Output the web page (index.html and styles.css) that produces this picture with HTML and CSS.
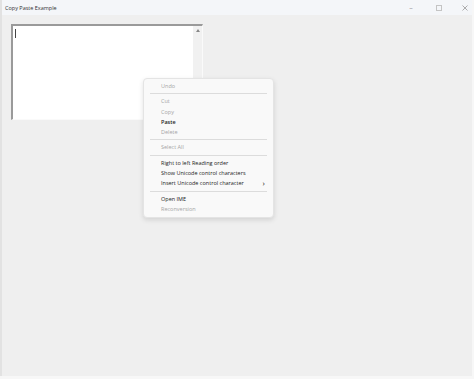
FILE: index.html
```html
<!DOCTYPE html>
<html lang="en">
  <head>
    <meta charset="UTF-8" />
    <title>Copy Paste Example</title>
    <link rel="stylesheet" href="styles.css">
  </head>
  <body>
    <main class="window">
      <header class="titlebar">
        <span class="title">Copy Paste Example</span>
        <div class="controls">
          <span class="ctl">&#x2013;</span>
          <span class="ctl max"></span>
          <svg class="close" width="6" height="6" viewBox="0 0 6 6">
            <path d="M0.5 0.5 L5.5 5.5 M5.5 0.5 L0.5 5.5" stroke="#999" stroke-width="0.8" fill="none" />
          </svg>
        </div>
      </header>
      <section class="client">
        <div class="textbox">
          <div class="edit"><span class="caret"></span></div>
          <div class="scroll"><span class="arrow"></span></div>
        </div>

        <div class="menu">
          <div class="item off">Undo</div>
          <div class="sep"></div>
          <div class="item off">Cut</div>
          <div class="item off">Copy</div>
          <div class="item bold">Paste</div>
          <div class="item off">Delete</div>
          <div class="sep"></div>
          <div class="item off">Select All</div>
          <div class="sep"></div>
          <div class="item">Right to left Reading order</div>
          <div class="item">Show Unicode control characters</div>
          <div class="item sub">Insert Unicode control character <span class="chev">&#x203A;</span></div>
          <div class="sep"></div>
          <div class="item">Open IME</div>
          <div class="item off">Reconversion</div>
        </div>
      </section>
    </main>
  </body>
</html>
```

FILE: styles.css
```css
body {
  margin: 0;
  width: 474px;
  height: 379px;
  background-color: #f7f7f7;
  font-family: "Open Sans", "Noto Sans", sans-serif;
  overflow: hidden;
}
.window {
  width: 472px;
  height: 376px;
  display: flex;
  flex-direction: column;
  background-color: #efefef;
  border-left: 2px solid #e2e2e2;
  box-sizing: border-box;
  position: relative;
}
.titlebar {
  height: 15px;
  background-color: #f4f6f9;
  display: flex;
  align-items: center;
  justify-content: space-between;
  padding-left: 3px;
}
.title {
  font-size: 5.5px;
  color: #333;
}
.controls {
  display: flex;
  align-items: center;
  gap: 17px;
  padding-right: 4px;
}
.ctl {
  width: 10px;
  font-size: 7px;
  color: #999;
  text-align: center;
}
.ctl.max {
  width: 4px;
  height: 4px;
  border: 1px solid #c4c4c4;
  margin: 0 3px;
}
.client {
  flex: 1;
  padding: 9px 0 0 9px;
}
.textbox {
  width: 192px;
  height: 96px;
  display: flex;
  box-sizing: border-box;
  border-top: 2px solid #9a9a9a;
  border-left: 2px solid #9a9a9a;
  border-right: 1px solid #fafafa;
  border-bottom: 1px solid #fafafa;
  background-color: #fff;
}
.edit {
  flex: 1;
  padding: 3px 0 0 2px;
}
.caret {
  display: block;
  width: 1px;
  height: 9px;
  background-color: #444;
}
.scroll {
  width: 9px;
  background-color: #f1f1f1;
  display: flex;
  justify-content: center;
  padding-top: 3px;
}
.arrow {
  width: 0;
  height: 0;
  border-left: 2px solid transparent;
  border-right: 2px solid transparent;
  border-bottom: 3px solid #888;
}
.menu {
  position: absolute;
  left: 141px;
  top: 78px;
  width: 131px;
  padding: 2px 0 3px;
  background-color: #f9f9f9;
  border: 1px solid #e4e4e4;
  border-radius: 4px;
  box-shadow: 0 2px 5px rgba(0, 0, 0, 0.12);
  box-sizing: border-box;
}
.item {
  height: 10.3px;
  line-height: 10.3px;
  padding-left: 17px;
  font-size: 5.5px;
  color: #1c1c1c;
  white-space: nowrap;
}
.item.off {
  color: #a5a5a5;
}
.item.bold {
  font-weight: 600;
}
.item.sub {
  display: flex;
  justify-content: space-between;
  padding-right: 8px;
}
.chev {
  font-size: 8px;
}
.sep {
  height: 1px;
  margin: 2px 6px;
  background-color: #dcdcdc;
}
```
